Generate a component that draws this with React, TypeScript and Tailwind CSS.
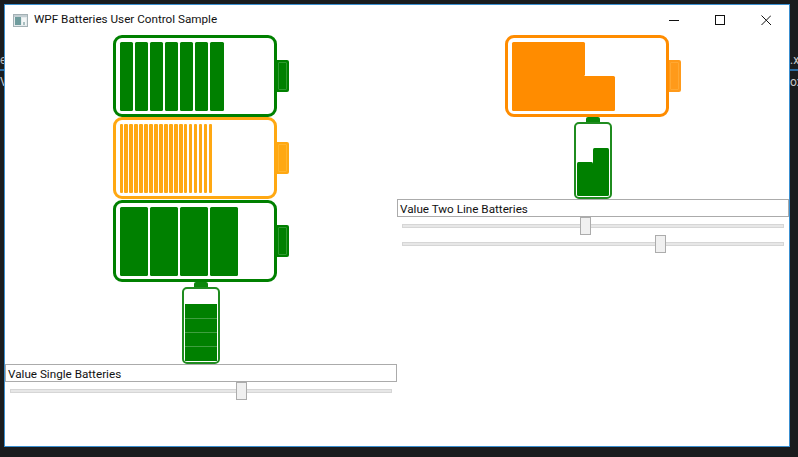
const GREEN = "#008000";

function Terminal({ color, inner }: { color: string; inner: string }) {
  return (
    <div className="w-[12px] h-[32px] rounded-r-[2px] p-[2px] pl-[1px]" style={{ backgroundColor: color }}>
      <div className="w-full h-full rounded-[1px] border" style={{ borderColor: inner }} />
    </div>
  );
}

function HBattery({ color, tip, inner, children }: { color: string; tip: string; inner: string; children: React.ReactNode }) {
  return (
    <div className="flex items-center w-[176px] h-[82px]">
      <div className="w-[164px] h-[82px] rounded-[9px] border-[3px] p-[3.5px] bg-white" style={{ borderColor: color }}>
        {children}
      </div>
      <Terminal color={tip} inner={inner} />
    </div>
  );
}

function VBattery({ children }: { children: React.ReactNode }) {
  return (
    <div className="flex flex-col items-center w-[38px]">
      <div className="w-[14px] h-[5px] rounded-t-[2px] bg-[#0a860a]" />
      <div className="w-[38px] h-[77px] rounded-[5px] border-2 border-[#1f8c1f] p-[1px] bg-white flex flex-col justify-end">
        {children}
      </div>
    </div>
  );
}

function Slider({ pos }: { pos: number }) {
  return (
    <div className="relative h-[18px] mx-[5px]">
      <div className="absolute left-0 right-0 top-[7px] h-[4px] bg-[#e7e7e7] border border-[#d6d6d6]" />
      <div
        className="absolute top-0 w-[11px] h-[18px] bg-[#f0f0f0] border border-[#acacac]"
        style={{ left: pos }}
      />
    </div>
  );
}

function Label({ text }: { text: string }) {
  return (
    <div className="h-[18px] w-full border border-[#ababab] pl-[2px] text-[11.7px] leading-[18px] text-[#111] font-['Roboto','Noto_Sans',sans-serif]">
      {text}
    </div>
  );
}

function Cells({ n, w, gap, rounded, color }: { n: number; w: number; gap: number; rounded: number; color: string }) {
  return (
    <div className="flex h-full" style={{ gap }}>
      {Array.from({ length: n }).map((_, i) => (
        <div key={i} className="h-full shrink-0" style={{ width: w, backgroundColor: color, borderRadius: rounded }} />
      ))}
    </div>
  );
}

export default function App() {
  return (
    <div className="relative w-[798px] h-[457px] overflow-hidden bg-[#1a1c1e]">
      <div className="absolute left-0 top-[53px] text-[12px] leading-[14px] text-[#b8b8b8] font-['Roboto',sans-serif]">e</div>
      <div className="absolute left-0 top-[75px] text-[12px] leading-[14px] text-[#c8c8c8] font-['Roboto',sans-serif]">V</div>
      <div className="absolute left-0 top-[69px] w-[5px] h-[2px] bg-[#2a6aa0]" />
      <div className="absolute left-[790px] top-[53px] text-[12px] leading-[14px] text-[#c8c8c8] font-['Roboto',sans-serif]">.x</div>
      <div className="absolute left-[790px] top-[69px] w-[8px] h-[2px] bg-[#2a6aa0]" />
      <div className="absolute left-[790px] top-[75px] text-[12px] leading-[14px] text-[#c8c8c8] font-['Roboto',sans-serif]">ox</div>

      <div className="absolute left-[4px] top-[4px] w-[786px] h-[443px] border border-[#3a8fd0] bg-white flex flex-col">
        <div className="h-[30px] flex items-center shrink-0">
          <svg className="ml-[8px] mr-[6px]" width="15" height="13" viewBox="0 0 15 13">
            <rect x="0.5" y="0.5" width="14" height="12" fill="#e4eaec" stroke="#a3b0b4" />
            <rect x="1" y="1" width="13" height="2" fill="#c3ced2" />
            <rect x="2" y="3" width="6" height="8" fill="#6f9c9d" />
            <rect x="9" y="4" width="4" height="7" fill="#f2f6f6" />
            <rect x="10" y="8" width="2" height="3" fill="#a9bec0" />
          </svg>
          <span className="text-[11.7px] text-[#111] font-['Roboto','Noto_Sans',sans-serif]">WPF Batteries User Control Sample</span>
          <div className="ml-auto flex h-full">
            {[
              <path key="m" d="M0 5.5H10" />,
              <rect key="r" x="0.5" y="0.5" width="9" height="9" />,
              <path key="c" d="M0.5 0.5L10 10M10 0.5L0.5 10" />,
            ].map((icon, i) => (
              <div key={i} className="w-[46px] h-full flex items-center justify-center">
                <svg width="10" height="10" viewBox="0 0 10 10" fill="none" stroke="#111" strokeWidth="1">
                  {icon}
                </svg>
              </div>
            ))}
          </div>
        </div>

        <div className="grid grid-cols-2 flex-1">
          <div className="flex flex-col items-center">
            <HBattery color={GREEN} tip={GREEN} inner="#2f9a2f">
              <Cells n={7} w={13.5} gap={1.6} rounded={1.5} color={GREEN} />
            </HBattery>
            <HBattery color="#ffa812" tip="#ffa812" inner="#ffb52e">
              <Cells n={19} w={3.2} gap={1.8} rounded={1} color="#ffa812" />
            </HBattery>
            <div className="h-px" />
            <HBattery color={GREEN} tip={GREEN} inner="#2f9a2f">
              <Cells n={4} w={28.6} gap={1.5} rounded={1.5} color={GREEN} />
            </HBattery>
            <VBattery>
              <div className="flex flex-col">
                <div className="h-[14px] bg-[#008000]" />
                <div className="h-[14px] bg-[#008000] border-t border-[#3f9f3f]" />
                <div className="h-[14px] bg-[#008000] border-t border-[#3f9f3f]" />
                <div className="h-[15px] bg-[#008000] border-t border-[#3f9f3f]" />
              </div>
            </VBattery>
            <Label text="Value Single Batteries" />
            <div className="w-full">
              <Slider pos={226} />
            </div>
          </div>

          <div className="flex flex-col items-center">
            <HBattery color="#ff8c00" tip="#ff9a1a" inner="#ffa833">
              <div className="flex flex-col h-full">
                <div className="h-1/2 w-[73px] bg-[#ff8c00] rounded-t-[1.5px] rounded-br-[1.5px]" />
                <div className="h-1/2 w-[103px] bg-[#ff8c00] rounded-b-[1.5px] rounded-tr-[1.5px]" />
              </div>
            </HBattery>
            <VBattery>
              <div className="flex items-end">
                <div className="w-1/2 h-[34px] bg-[#008000] rounded-t-[1.5px] rounded-bl-[1.5px]" />
                <div className="w-1/2 h-[48px] bg-[#008000] rounded-t-[1.5px] rounded-br-[1.5px]" />
              </div>
            </VBattery>
            <Label text="Value Two Line Batteries" />
            <div className="w-full">
              <Slider pos={178} />
              <Slider pos={253} />
            </div>
          </div>
        </div>
      </div>
    </div>
  );
}
